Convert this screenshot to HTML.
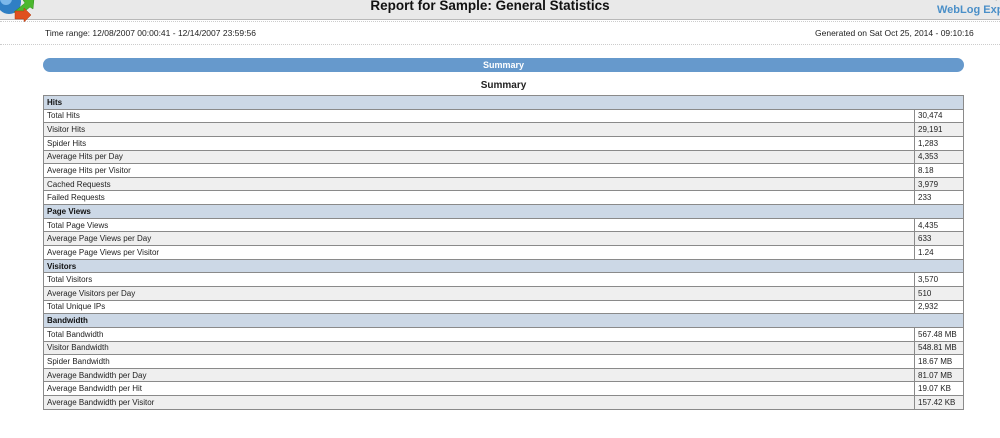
<!DOCTYPE html>
<html><head><meta charset="utf-8"><style>
*{margin:0;padding:0;box-sizing:border-box}
body{width:1000px;height:438px;background:#fff;font-family:"Liberation Sans",Arial,sans-serif;position:relative;overflow:hidden;color:#222}
.hdr{position:absolute;left:0;top:0;width:1000px;height:20px;background:#e9e9e9;border-bottom:1px solid #b8b8b8}
.title{position:absolute;left:0;width:980px;top:-2px;text-align:center;font-weight:bold;font-size:13.5px;color:#111}
.weblog{position:absolute;left:937px;top:4px;font-weight:bold;font-size:11px;color:#4a8fc8;white-space:nowrap}
.pw{position:absolute;left:962px;top:-6px;font-size:7px;color:#999}
.dot{position:absolute;left:0;width:1000px;border-top:1px dotted #ccc}
.small{position:absolute;font-size:8.5px;color:#222;top:28px}
.bar{position:absolute;left:43px;top:58px;width:921px;height:14px;background:#6699cc;border-radius:7px;color:#fff;font-weight:bold;font-size:9px;text-align:center;line-height:14px}
.h2{position:absolute;left:0;width:1007px;top:80px;text-align:center;font-weight:bold;font-size:10px}
table{position:absolute;left:43px;top:95px;width:921px;border-collapse:collapse;font-size:8px}
td{border:1px solid #8a8a8a;height:13.65px;padding:0 3px;line-height:11px;color:#222}
tr.s td{background:#ccd8e6;font-weight:bold;color:#111}
tr.g td{background:#efefef}
td.v{width:49px}
</style></head><body>
<div class="hdr"></div>
<svg style="position:absolute;left:0;top:0" width="36" height="24" viewBox="0 0 36 24">
<circle cx="9" cy="2" r="12" fill="#2f7fc4"/><circle cx="6" cy="-1" r="6" fill="#7ab8ea"/>
<path d="M14 12 L25 3 L23 0 L34 -1 L33 9 L30 7 L19 16 Z" fill="#4cb82e" stroke="#2e8a1a" stroke-width="0.5"/>
<path d="M15 11 L24 11 L24 8 L31 15 L24 22 L24 19 L15 19 Z" fill="#e0501e" stroke="#b03a10" stroke-width="0.5"/>
</svg>
<div class="title">Report for Sample: General Statistics</div>
<div class="pw">Powered by</div>
<div class="weblog">WebLog Expert</div>
<div class="dot" style="top:21px"></div>
<div class="small" style="left:45px">Time range: 12/08/2007 00:00:41 - 12/14/2007 23:59:56</div>
<div class="small" style="left:815px">Generated on Sat Oct 25, 2014 - 09:10:16</div>
<div class="dot" style="top:44px"></div>
<div class="bar">Summary</div>
<div class="h2">Summary</div>
<table>
<tr class="s"><td colspan="2">Hits</td></tr>
<tr><td>Total Hits</td><td class="v">30,474</td></tr>
<tr class="g"><td>Visitor Hits</td><td class="v">29,191</td></tr>
<tr><td>Spider Hits</td><td class="v">1,283</td></tr>
<tr class="g"><td>Average Hits per Day</td><td class="v">4,353</td></tr>
<tr><td>Average Hits per Visitor</td><td class="v">8.18</td></tr>
<tr class="g"><td>Cached Requests</td><td class="v">3,979</td></tr>
<tr><td>Failed Requests</td><td class="v">233</td></tr>
<tr class="s"><td colspan="2">Page Views</td></tr>
<tr><td>Total Page Views</td><td class="v">4,435</td></tr>
<tr class="g"><td>Average Page Views per Day</td><td class="v">633</td></tr>
<tr><td>Average Page Views per Visitor</td><td class="v">1.24</td></tr>
<tr class="s"><td colspan="2">Visitors</td></tr>
<tr><td>Total Visitors</td><td class="v">3,570</td></tr>
<tr class="g"><td>Average Visitors per Day</td><td class="v">510</td></tr>
<tr><td>Total Unique IPs</td><td class="v">2,932</td></tr>
<tr class="s"><td colspan="2">Bandwidth</td></tr>
<tr><td>Total Bandwidth</td><td class="v">567.48 MB</td></tr>
<tr class="g"><td>Visitor Bandwidth</td><td class="v">548.81 MB</td></tr>
<tr><td>Spider Bandwidth</td><td class="v">18.67 MB</td></tr>
<tr class="g"><td>Average Bandwidth per Day</td><td class="v">81.07 MB</td></tr>
<tr><td>Average Bandwidth per Hit</td><td class="v">19.07 KB</td></tr>
<tr class="g"><td>Average Bandwidth per Visitor</td><td class="v">157.42 KB</td></tr>
</table>
</body></html>
